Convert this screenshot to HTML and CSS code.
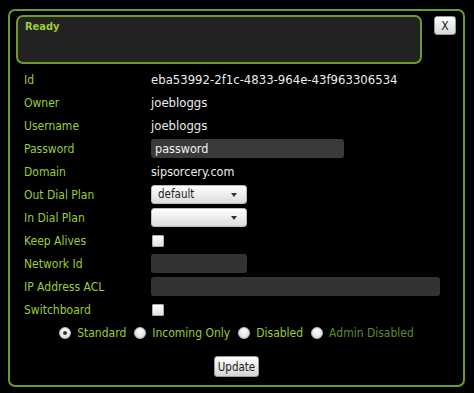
FILE: index.html
```html
<!DOCTYPE html>
<html lang="en">
<head>
  <meta charset="UTF-8">
  <title>SIP Account</title>
  <link rel="stylesheet" href="styles.css">
</head>
<body>
  <div class="panel">
    <div class="panel-head">
      <div class="status">Ready</div>
      <button class="close-btn">X</button>
    </div>

    <div class="fields">
      <div class="label">Id</div>
      <div class="value">eba53992-2f1c-4833-964e-43f963306534</div>

      <div class="label">Owner</div>
      <div class="value">joebloggs</div>

      <div class="label">Username</div>
      <div class="value">joebloggs</div>

      <div class="label">Password</div>
      <div class="value"><div class="text-input wide">password</div></div>

      <div class="label">Domain</div>
      <div class="value domain">sipsorcery.com</div>

      <div class="label">Out Dial Plan</div>
      <div class="value"><div class="select">default<span class="arrow"></span></div></div>

      <div class="label">In Dial Plan</div>
      <div class="value"><div class="select"><span class="arrow"></span></div></div>

      <div class="label">Keep Alives</div>
      <div class="value"><span class="checkbox"></span></div>

      <div class="label">Network Id</div>
      <div class="value"><div class="text-input short"></div></div>

      <div class="label">IP Address ACL</div>
      <div class="value"><div class="text-input full"></div></div>

      <div class="label">Switchboard</div>
      <div class="value"><span class="checkbox"></span></div>
    </div>

    <div class="radio-row">
      <span class="radio checked"></span><span class="radio-label">Standard</span>
      <span class="radio"></span><span class="radio-label">Incoming Only</span>
      <span class="radio"></span><span class="radio-label">Disabled</span>
      <span class="radio"></span><span class="radio-label disabled">Admin Disabled</span>
    </div>

    <div class="actions">
      <button class="update-btn">Update</button>
    </div>
  </div>
</body>
</html>
```

FILE: styles.css
```css
body {
  margin: 0;
  background-color: #000;
  font-family: "DejaVu Sans Condensed", "Liberation Sans", sans-serif;
  font-size: 12px;
  color: #e6e6e6;
}

.panel {
  box-sizing: border-box;
  width: 457px;
  height: 378px;
  margin: 9px 0 0 8px;
  padding: 4px 0 0 6px;
  border: 2px solid #6c9b2c;
  border-radius: 7px;
}

.panel-head {
  display: flex;
  align-items: flex-start;
  gap: 12px;
}

.status {
  box-sizing: border-box;
  width: 406px;
  height: 49px;
  padding: 3px 7px;
  background-color: #222;
  border: 2px solid #6c9b2c;
  border-radius: 7px;
  color: #9acd32;
  font-size: 11px;
  font-weight: bold;
}

.close-btn {
  width: 22px;
  height: 19px;
  margin-top: 1px;
  padding: 0;
  border: 1px solid #999;
  border-radius: 3px;
  background: linear-gradient(#ffffff, #d8d8d8);
  font-family: inherit;
  font-size: 12px;
  color: #222;
}

.fields {
  display: grid;
  grid-template-columns: 127px 1fr;
  grid-auto-rows: 23px;
  margin-top: 4px;
  padding-left: 8px;
}

.label,
.value {
  display: flex;
  align-items: center;
}

.label {
  color: #9acd32;
}

.value {
  color: #ececec;
  font-size: 13px;
}

.value.domain {
  font-size: 12.5px;
}

.text-input {
  box-sizing: border-box;
  height: 19px;
  padding: 1px 4px;
  background-color: #3a3a3a;
  border-radius: 3px;
  color: #f2f2f2;
  font-size: 12.5px;
  line-height: 17px;
}

.text-input.wide {
  width: 193px;
}

.text-input.short {
  width: 96px;
  background-color: #333;
}

.text-input.full {
  width: 289px;
  background-color: #333;
}

.select {
  position: relative;
  box-sizing: border-box;
  width: 96px;
  height: 19px;
  padding: 0 6px;
  border: 1px solid #bbb;
  border-radius: 3px;
  background: linear-gradient(#ffffff, #dcdcdc);
  color: #222;
  font-size: 11.5px;
  line-height: 17px;
}

.select .arrow {
  position: absolute;
  right: 9px;
  top: 7px;
  border-left: 3px solid transparent;
  border-right: 3px solid transparent;
  border-top: 4px solid #333;
}

.checkbox {
  display: inline-block;
  width: 10px;
  height: 10px;
  margin-left: 1px;
  background: linear-gradient(#ffffff, #e0e0e0);
  border: 1px solid #aaa;
  border-radius: 1px;
}

.radio-row {
  display: flex;
  align-items: center;
  justify-content: center;
  height: 23px;
  margin-left: -6px;
}

.radio {
  box-sizing: border-box;
  width: 12px;
  height: 12px;
  margin: 0 6px 0 8px;
  border-radius: 50%;
  background: radial-gradient(circle at 50% 35%, #ffffff, #d4d4d4);
  border: 1px solid #bbb;
  position: relative;
}

.radio:first-child {
  margin-left: 0;
}

.radio.checked::after {
  content: "";
  position: absolute;
  left: 3px;
  top: 3px;
  width: 4px;
  height: 4px;
  border-radius: 50%;
  background-color: #333;
}

.radio-label {
  color: #9acd32;
}

.radio-label.disabled {
  color: #5e8a26;
}

.actions {
  display: flex;
  justify-content: center;
  margin-top: 12px;
  margin-left: -6px;
}

.update-btn {
  height: 21px;
  padding: 0 3px;
  border: 1px solid #999;
  border-radius: 3px;
  background: linear-gradient(#ffffff, #d4d4d4);
  font-family: inherit;
  font-size: 11.5px;
  color: #222;
}
```
